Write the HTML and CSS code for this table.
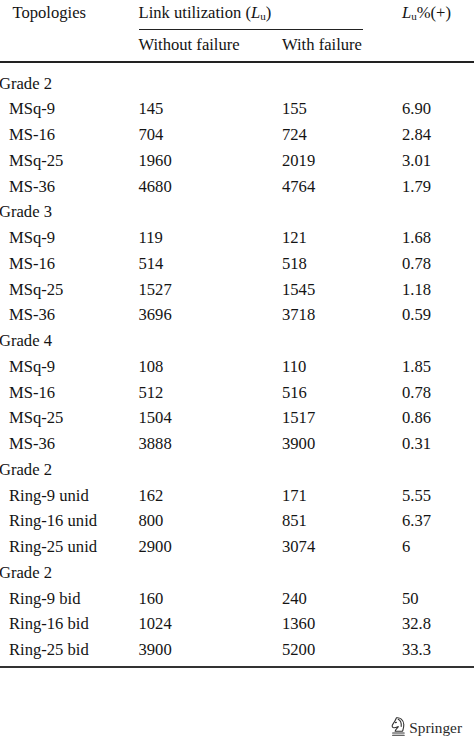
FILE: index.html
```html
<!DOCTYPE html>
<html>
<head>
<meta charset="utf-8">
<link rel="stylesheet" href="styles.css">
</head>
<body>
<div class="page">
  <div class="table">
    <div class="row htop">
      <div class="cell topo">Topologies</div>
      <div class="cell group"><span>Link utilization (<i>L</i><sub>u</sub>)</span></div>
      <div class="cell"><i>L</i><sub>u</sub>%(+)</div>
    </div>
    <div class="row hsub">
      <div class="cell"></div>
      <div class="cell">Without failure</div>
      <div class="cell">With failure</div>
      <div class="cell"></div>
    </div>
    <div class="body">
      <div class="row grade"><div class="cell">Grade 2</div></div>
      <div class="row"><div class="cell name">MSq-9</div><div class="cell">145</div><div class="cell">155</div><div class="cell">6.90</div></div>
      <div class="row"><div class="cell name">MS-16</div><div class="cell">704</div><div class="cell">724</div><div class="cell">2.84</div></div>
      <div class="row"><div class="cell name">MSq-25</div><div class="cell">1960</div><div class="cell">2019</div><div class="cell">3.01</div></div>
      <div class="row"><div class="cell name">MS-36</div><div class="cell">4680</div><div class="cell">4764</div><div class="cell">1.79</div></div>
      <div class="row grade"><div class="cell">Grade 3</div></div>
      <div class="row"><div class="cell name">MSq-9</div><div class="cell">119</div><div class="cell">121</div><div class="cell">1.68</div></div>
      <div class="row"><div class="cell name">MS-16</div><div class="cell">514</div><div class="cell">518</div><div class="cell">0.78</div></div>
      <div class="row"><div class="cell name">MSq-25</div><div class="cell">1527</div><div class="cell">1545</div><div class="cell">1.18</div></div>
      <div class="row"><div class="cell name">MS-36</div><div class="cell">3696</div><div class="cell">3718</div><div class="cell">0.59</div></div>
      <div class="row grade"><div class="cell">Grade 4</div></div>
      <div class="row"><div class="cell name">MSq-9</div><div class="cell">108</div><div class="cell">110</div><div class="cell">1.85</div></div>
      <div class="row"><div class="cell name">MS-16</div><div class="cell">512</div><div class="cell">516</div><div class="cell">0.78</div></div>
      <div class="row"><div class="cell name">MSq-25</div><div class="cell">1504</div><div class="cell">1517</div><div class="cell">0.86</div></div>
      <div class="row"><div class="cell name">MS-36</div><div class="cell">3888</div><div class="cell">3900</div><div class="cell">0.31</div></div>
      <div class="row grade"><div class="cell">Grade 2</div></div>
      <div class="row"><div class="cell name">Ring-9 unid</div><div class="cell">162</div><div class="cell">171</div><div class="cell">5.55</div></div>
      <div class="row"><div class="cell name">Ring-16 unid</div><div class="cell">800</div><div class="cell">851</div><div class="cell">6.37</div></div>
      <div class="row"><div class="cell name">Ring-25 unid</div><div class="cell">2900</div><div class="cell">3074</div><div class="cell">6</div></div>
      <div class="row grade"><div class="cell">Grade 2</div></div>
      <div class="row"><div class="cell name">Ring-9 bid</div><div class="cell">160</div><div class="cell">240</div><div class="cell">50</div></div>
      <div class="row"><div class="cell name">Ring-16 bid</div><div class="cell">1024</div><div class="cell">1360</div><div class="cell">32.8</div></div>
      <div class="row"><div class="cell name">Ring-25 bid</div><div class="cell">3900</div><div class="cell">5200</div><div class="cell">33.3</div></div>
    </div>
  </div>
  <div class="footer">
    <div class="logo">
      <svg class="knight" width="16" height="21" viewBox="0 0 16 21" fill="none" stroke="#333" stroke-width="1.1" stroke-linejoin="round" stroke-linecap="round">
        <path d="M6.5 1.8 C9.8 1.2 13.6 3.6 13.8 8.6 C13.9 11.4 13.1 13.4 12.6 15.2 L5.2 15.2 C5.6 13.4 7.2 12.2 8.3 10.6 C6.8 11.2 4.8 12.2 3.2 11.6 C2.1 11.1 1.9 9.6 2.6 8.6 C4.1 6.6 5.3 4.8 6.5 1.8 Z"/>
        <path d="M8.2 3.2 C10.4 4.4 11.6 7 11.2 10.4"/>
        <path d="M5.4 6.6 L6.4 6.4"/>
        <path d="M2.6 17 L14.2 17"/>
        <path d="M2.6 19.2 L14.2 19.2"/>
      </svg>
      <span class="brand">Springer</span>
    </div>
  </div>
</div>
</body>
</html>
```
FILE: styles.css
```css
html, body {
  margin: 0;
  padding: 0;
  background: #ffffff;
}
.page {
  width: 474px;
  height: 746px;
  font-family: "Liberation Serif", "Times New Roman", serif;
  font-size: 16.6px;
  color: #141414;
}
.row {
  display: grid;
  grid-template-columns: 138.5px 143.5px 120px 1fr;
  line-height: 25.75px;
  white-space: nowrap;
}
.htop .cell {
  padding-bottom: 3.6px;
}
.htop .topo {
  padding-left: 12.5px;
}
.htop .group {
  grid-column: 2 / 4;
  padding-bottom: 0;
}
.htop .group span {
  display: block;
  width: 224.5px;
  padding-bottom: 3.6px;
  border-bottom: 1px solid #222;
}
.hsub {
  padding-top: 1.4px;
  padding-bottom: 3.5px;
  border-bottom: 2px solid #222;
}
.body {
  padding-top: 7.6px;
  padding-bottom: 3.1px;
  border-bottom: 2px solid #333;
}
.grade .cell {
  grid-column: 1 / 5;
  margin-left: -1px;
}
.name {
  padding-left: 9px;
}
i {
  font-style: italic;
}
sub {
  font-size: 11px;
  line-height: 0;
  vertical-align: -2px;
}
.footer {
  display: flex;
  justify-content: flex-end;
  padding-top: 48px;
  padding-right: 12px;
}
.logo {
  display: flex;
  align-items: flex-end;
  gap: 3px;
}
.knight {
  display: block;
}
.brand {
  font-family: "Liberation Serif", "Times New Roman", serif;
  font-size: 15.3px;
  line-height: 18px;
  color: #2a2a2a;
}
```
